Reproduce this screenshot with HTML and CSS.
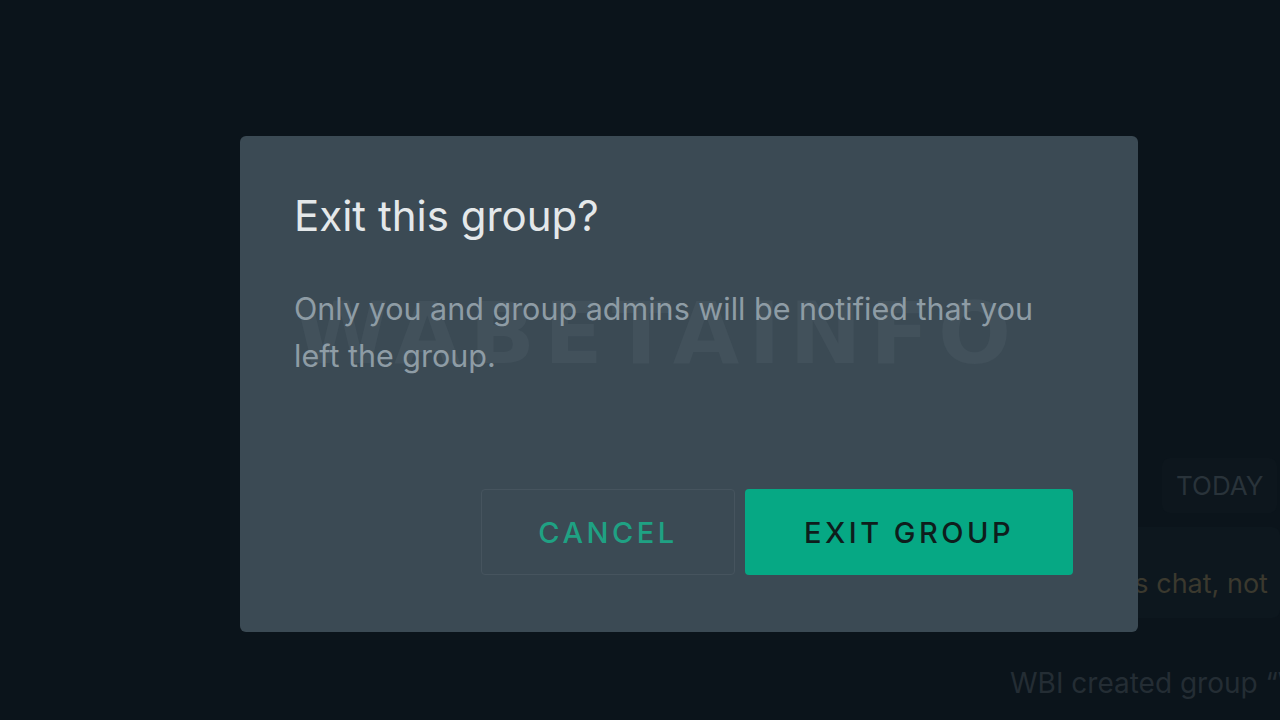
FILE: index.html
```html
<!DOCTYPE html>
<html lang="en">
<head>
  <meta charset="UTF-8" />
  <meta name="viewport" content="width=device-width, initial-scale=1.0" />
  <title>Exit this group?</title>
  <link rel="stylesheet" href="styles.css">
</head>
<body>
  <div class="chat">
    <div class="day-pill">TODAY</div>
    <div class="system-msg">Messages and calls in this chat, not</div>
    <div class="created-msg">WBI created group “WBI”</div>
  </div>

  <div class="overlay">
    <div class="dialog">
      <h1 class="dialog-title">Exit this group?</h1>
      <div class="dialog-body">
        <div class="watermark">WABETAINFO</div>
        <p>Only you and group admins will be notified that you left the group.</p>
      </div>
      <div class="dialog-actions">
        <button class="btn btn-cancel">CANCEL</button>
        <button class="btn btn-exit">EXIT GROUP</button>
      </div>
    </div>
  </div>
</body>
</html>
```

FILE: styles.css
```css
html, body {
  margin: 0;
  padding: 0;
  height: 100%;
}
body {
  background-color: #0b141b;
  font-family: Inter, "Liberation Sans", sans-serif;
  overflow: hidden;
  position: relative;
}

/* chat behind the dialog */
.chat {
  display: flex;
  flex-direction: column;
  padding-top: 458px;
  padding-left: 1010px;
  white-space: nowrap;
}
.day-pill {
  align-self: flex-start;
  margin-left: 152px;
  padding: 12px 14px;
  background-color: #0d161d;
  border-radius: 8px;
  color: #29333a;
  font-size: 26px;
}
.system-msg {
  margin-top: 14px;
  margin-left: -196px;
  padding: 40px 0 18px 0;
  background-color: #0d171e;
  border-radius: 8px;
  color: #3b392e;
  font-size: 27px;
}
.created-msg {
  margin-top: 40px;
  padding: 8px 0;
  color: #242d34;
  font-size: 28px;
}

/* dialog */
.overlay {
  position: absolute;
  top: 0;
  left: 0;
  right: 0;
  bottom: 0;
}
.dialog {
  position: absolute;
  left: 240px;
  top: 136px;
  width: 898px;
  height: 496px;
  box-sizing: border-box;
  padding: 54px 54px 0 54px;
  background-color: #3b4a54;
  border-radius: 6px;
  display: flex;
  flex-direction: column;
}
.dialog-title {
  margin: 0;
  font-size: 42px;
  font-weight: normal;
  line-height: 52px;
  color: #e4e8ea;
}
.dialog-body {
  position: relative;
  margin-top: 43px;
  width: 760px;
}
.dialog-body p {
  position: relative;
  margin: 0;
  font-size: 30.5px;
  line-height: 47px;
  color: #8e9ca5;
}
.watermark {
  position: absolute;
  left: 0;
  top: -2px;
  font-family: "DejaVu Sans", sans-serif;
  font-weight: bold;
  font-size: 86px;
  letter-spacing: 9px;
  color: #42515b;
}
.dialog-actions {
  display: flex;
  justify-content: flex-end;
  gap: 10px;
  margin-top: auto;
  margin-bottom: 57px;
  margin-right: 11px;
}
.btn {
  height: 86px;
  border-radius: 4px;
  font-family: Inter, "Liberation Sans", sans-serif;
  font-size: 29px;
  font-weight: 500;
  letter-spacing: 3.5px;
  cursor: pointer;
}
.btn-cancel {
  width: 254px;
  background-color: transparent;
  border: 1px solid #46545e;
  color: #1fa183;
}
.btn-exit {
  width: 328px;
  background-color: #06a884;
  border: none;
  color: #0e1d1c;
}
```
